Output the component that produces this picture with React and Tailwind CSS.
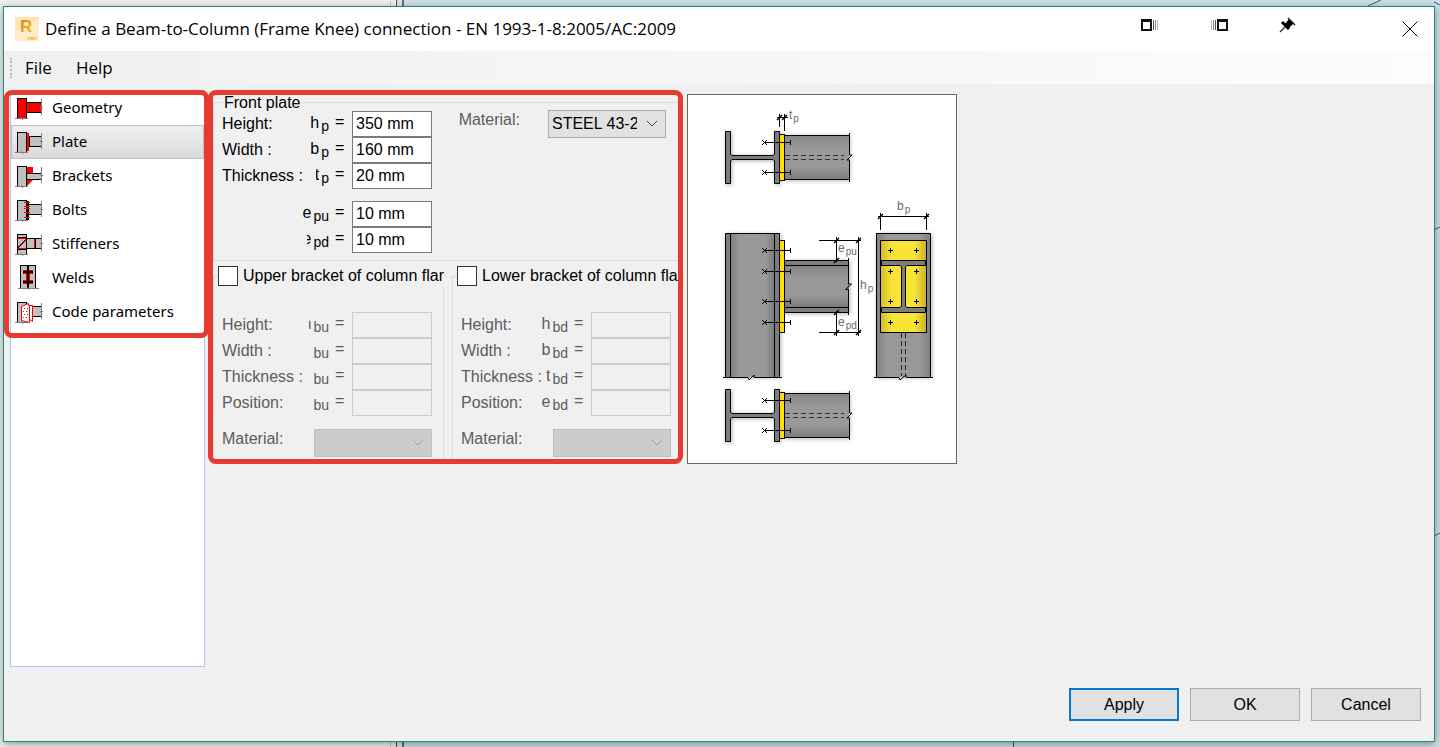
import { useState } from "react";

const FORM_FONT = "font-['Liberation_Sans',Arial,sans-serif]";

/* ---------- Navigation icons ---------- */

// Column stub with a ground line, and a beam coming in from the right
function Joint({ fill = "#c0c0c0", beamTop = 8, beamBottom = 19, children }) {
  return (
    <svg width="28" height="26" viewBox="0 0 28 26" className="shrink-0" aria-hidden="true">
      <rect x="12" y={beamTop} width="14" height={beamBottom - beamTop} fill={fill} />
      <path d={`M12 ${beamTop + 0.5}H26M12 ${beamBottom - 0.5}H26`} stroke="#000" />
      <rect x="2.5" y="4.5" width="9" height="20" fill={fill} stroke="#000" />
      <path d="M26.5 5V21M25 13.5H28M0 24.5H13M6 23L8 26" stroke="#808080" fill="none" />
      {children}
    </svg>
  );
}

function GeometryIcon() {
  return <Joint fill="#ff0000" />;
}

function PlateIcon() {
  return (
    <Joint>
      <rect x="12" y="5" width="2" height="18" fill="#ff0000" />
      <path d="M14.5 8V19" stroke="#000" />
    </Joint>
  );
}

function BracketsIcon() {
  return (
    <Joint beamTop={11} beamBottom={18}>
      <path d="M12 5H18V11H12ZM12 18H18L12 24Z" fill="#ff0000" />
    </Joint>
  );
}

function BoltsIcon() {
  return (
    <Joint>
      <rect x="11" y="5" width="3" height="19" fill="#000" />
      <path d="M9 6.5H15M9 10.5H15M9 12.5H15M9 16.5H15M9 21.5H15" stroke="#ff0000" />
    </Joint>
  );
}

function StiffenersIcon() {
  return (
    <Joint>
      <path d="M3 7.5H11M3 19.5H11M3 18L11 10" stroke="#000" />
      <path d="M3 8.5H11M3 18.5H11M3 17L11 9" stroke="#ff0000" />
      <path d="M19.5 9V18" stroke="#ff0000" />
      <path d="M20.5 9V18" stroke="#000" />
    </Joint>
  );
}

function WeldsIcon() {
  return (
    <svg width="28" height="26" viewBox="0 0 28 26" className="shrink-0" aria-hidden="true">
      <rect x="5.5" y="1.5" width="15" height="23" fill="#c0c0c0" stroke="#000" />
      <path d="M8 6.5H18M8 9.5H18M8 16.5H18M8 19.5H18M11.5 9V17M14.5 9V17" stroke="#ff0000" />
      <path d="M8 8H18M8 18H18M13 2V24" stroke="#000" strokeWidth="2" />
      <path d="M3 24.5H24M12 23L14 26" stroke="#808080" />
    </svg>
  );
}

function CodeIcon() {
  return (
    <Joint>
      <path d="M6.5 8.5L13.5 5.5V7.5H17.5V23.5L14.5 21.5V24.5L6.5 22.5Z" fill="#fff" stroke="#ff0000" />
      <path d="M14.5 8V22" stroke="#ff0000" />
      <path d="M9 10.5H13M8 13.5H13M9 16.5H13M8 19.5H13" stroke="#ff0000" strokeDasharray="1 2" />
    </Joint>
  );
}

const SECTIONS = [
  { name: "Geometry", Icon: GeometryIcon },
  { name: "Plate", Icon: PlateIcon },
  { name: "Brackets", Icon: BracketsIcon },
  { name: "Bolts", Icon: BoltsIcon },
  { name: "Stiffeners", Icon: StiffenersIcon },
  { name: "Welds", Icon: WeldsIcon },
  { name: "Code parameters", Icon: CodeIcon },
];

/* ---------- Title bar ---------- */

function AppLogo() {
  return (
    <svg width="24" height="24" viewBox="0 0 24 24" className="shrink-0" aria-hidden="true">
      <defs>
        <linearGradient id="logo-r" x1="0" y1="0" x2="1" y2="1">
          <stop offset="0" stopColor="#b9812c" />
          <stop offset="0.5" stopColor="#f0a31a" />
          <stop offset="1" stopColor="#fdb515" />
        </linearGradient>
      </defs>
      <rect width="24" height="24" fill="#fee3b4" />
      <path d="M0 24V14L24 2V24Z" fill="#fdeccb" />
      <text x="5" y="15" fontSize="17" fontWeight="700" fill="url(#logo-r)" fontFamily="Liberation Sans, sans-serif">
        R
      </text>
      <text x="13" y="23" fontSize="4" fontWeight="700" fill="#f5a400" fontFamily="Liberation Sans, sans-serif">
        PRO
      </text>
    </svg>
  );
}

function TitleBar() {
  return (
    <header className="flex h-11 items-center bg-white pl-[11px] pr-4">
      <AppLogo />
      <h1 className="ml-[6px] truncate font-['Open_Sans','Noto_Sans',sans-serif] text-[17px] text-black">
        Define a Beam-to-Column (Frame Knee) connection - EN 1993-1-8:2005/AC:2009
      </h1>
      <div className="mb-2 ml-auto flex items-center gap-[51px]">
        <button type="button" aria-label="Dock left">
          <svg width="18" height="12" viewBox="0 0 18 12">
            <path d="M0 0H11V12H0ZM2 3V10H9V3Z" fill="#111" fillRule="evenodd" />
            <path d="M12.5 1V11" stroke="#555" />
            <path d="M14.5 1V11" stroke="#888" />
            <path d="M16.5 1V11" stroke="#bbb" />
          </svg>
        </button>
        <button type="button" aria-label="Dock right">
          <svg width="18" height="12" viewBox="0 0 18 12">
            <path d="M7 0H18V12H7ZM9 3V10H16V3Z" fill="#111" fillRule="evenodd" />
            <path d="M5.5 1V11" stroke="#555" />
            <path d="M3.5 1V11" stroke="#888" />
            <path d="M1.5 1V11" stroke="#bbb" />
          </svg>
        </button>
        <button type="button" aria-label="Pin">
          <svg width="17" height="16" viewBox="0 0 17 16">
            <path d="M1 15L6 10" stroke="#333" strokeWidth="1.5" />
            <path d="M3 5L10 12" stroke="#000" strokeWidth="3" />
            <path d="M6 7L10 2L15 6L10 11Z" fill="#000" />
            <path d="M9 1L16 8" stroke="#222" strokeWidth="1.5" />
          </svg>
        </button>
      </div>
      <button type="button" aria-label="Close" className="ml-[106px]">
        <svg width="16" height="16" viewBox="0 0 16 16">
          <path d="M0.5 0.5L15.5 15.5M15.5 0.5L0.5 15.5" stroke="#000" />
        </svg>
      </button>
    </header>
  );
}

function MenuBar() {
  return (
    <nav className="flex h-[33px] items-center bg-linear-to-r from-[#f0f0f0] to-[#fcfcfc] pl-[6px] font-['Open_Sans','Noto_Sans',sans-serif] text-[17px] text-black">
      <span className="h-5 border-l-2 border-dotted border-[#b8b8b8]" />
      <button type="button" className="ml-[13px]">File</button>
      <button type="button" className="ml-6">Help</button>
    </nav>
  );
}

/* ---------- Form ---------- */

// A narrow cell cuts the leading letter off on its left side
function Symbol({ letter, sub, cut = "" }) {
  return (
    <span className="flex w-[27px] shrink-0 items-center justify-end gap-0.5">
      <span className={`flex justify-end overflow-hidden pb-0.5 leading-5 ${cut}`}>{letter}</span>
      <span className="pt-1 text-sm leading-5">{sub}</span>
    </span>
  );
}

function Field({ id, label, letter, sub, cut, value = "", onChange, disabled }) {
  return (
    <div className={`flex h-[26px] items-center ${disabled ? "text-[#5c5c5c]" : "text-black"}`}>
      <label htmlFor={id} className="w-20 shrink-0 whitespace-nowrap">
        {label}
      </label>
      <Symbol letter={letter} sub={sub} cut={cut} />
      <span className="w-[23px] shrink-0 pb-1 pl-[6px] leading-5">=</span>
      <input
        id={id}
        aria-label={label ? undefined : `${letter} ${sub}`}
        value={value}
        onChange={(e) => onChange?.(e.target.value)}
        disabled={disabled}
        className="h-[26px] w-20 border border-[#7a7a7a] bg-white px-[3px] text-black disabled:border-[#cccccc] disabled:bg-[#f0f0f0]"
      />
    </div>
  );
}

function MaterialSelect({ id, disabled, children }) {
  return (
    <div className="relative h-7 w-[118px] shrink-0">
      <select
        id={id}
        disabled={disabled}
        className="h-7 w-full appearance-none overflow-hidden border border-[#adadad] bg-[#e1e1e1] pl-[3px] pr-7 text-black disabled:border-[#bfbfbf] disabled:bg-[#cccccc] disabled:opacity-100"
      >
        {children}
      </select>
      <svg
        width="12"
        height="8"
        viewBox="0 0 12 8"
        className={`pointer-events-none absolute right-2 top-[10px] ${disabled ? "text-[#a0a0a0]" : "text-[#444444]"}`}
      >
        <path d="M1 1L6 6L11 1" fill="none" stroke="currentColor" />
      </svg>
    </div>
  );
}

const FRONT_FIELDS = [
  { id: "hp", label: "Height:", letter: "h", sub: "p" },
  { id: "bp", label: "Width :", letter: "b", sub: "p", cut: "w-2" },
  { id: "tp", label: "Thickness :", letter: "t", sub: "p", cut: "w-[3px]" },
];

const EDGE_FIELDS = [
  { id: "epu", letter: "e", sub: "pu", cut: "w-2" },
  { id: "epd", letter: "e", sub: "pd", cut: "w-1" },
];

function FrontPlate() {
  const [values, setValues] = useState({
    hp: "350 mm",
    bp: "160 mm",
    tp: "20 mm",
    epu: "10 mm",
    epd: "10 mm",
  });

  const renderField = (f) => (
    <Field
      key={f.id}
      {...f}
      value={values[f.id]}
      onChange={(v) => setValues({ ...values, [f.id]: v })}
    />
  );

  return (
    <fieldset className="border-b border-l border-t border-[#dcdcdc] pb-[7px] pl-2">
      <legend className="ml-px px-px text-black leading-[15px]">Front plate</legend>
      <div className="flex justify-between pr-3">
        <div className="space-y-3 pt-px">
          <div>{FRONT_FIELDS.map(renderField)}</div>
          <div>{EDGE_FIELDS.map(renderField)}</div>
        </div>
        <div className="flex gap-7">
          <label htmlFor="plate-material" className="text-[#5c5c5c] leading-5">
            Material:
          </label>
          <MaterialSelect id="plate-material">
            <option>STEEL 43-275</option>
            <option>STEEL 50-355</option>
          </MaterialSelect>
        </div>
      </div>
    </fieldset>
  );
}

function Bracket({ name, title, sub, cuts, className }) {
  const [enabled, setEnabled] = useState(false);
  const rows = [
    { label: "Height:", letter: "h" },
    { label: "Width :", letter: "b" },
    { label: "Thickness :", letter: "t" },
    { label: "Position:", letter: "e" },
  ];

  return (
    <fieldset className={`min-w-0 border-l border-t border-[#dcdcdc] pb-0.5 ${className}`}>
      <legend className="ml-1 flex h-[26px] w-[calc(100%-3px)] items-center overflow-hidden bg-[#f0f0f0]">
        <input
          id={name}
          type="checkbox"
          checked={enabled}
          onChange={(e) => setEnabled(e.target.checked)}
          className="h-5 w-5 shrink-0 appearance-none border border-[#333333] bg-white checked:bg-[#333333]"
        />
        <label htmlFor={name} className="whitespace-nowrap pl-[5px] text-black">
          {title}
        </label>
      </legend>
      <div className="pl-2 pt-[23px]">
        {rows.map((row, i) => (
          <Field
            key={row.label}
            id={`${name}-${row.letter}`}
            {...row}
            sub={sub}
            cut={cuts[i]}
            disabled={!enabled}
          />
        ))}
        <div className="mt-[13px] flex">
          <label htmlFor={`${name}-material`} className="w-[92px] shrink-0 text-[#5c5c5c] leading-5">
            Material:
          </label>
          <MaterialSelect id={`${name}-material`} disabled={!enabled} />
        </div>
      </div>
    </fieldset>
  );
}

/* ---------- Connection drawing ---------- */

function Bolt({ y }) {
  return (
    <path
      d={`M77 ${y}H103M103.5 ${y - 2.5}V${y + 2.5}M75 ${y - 2.5}L80 ${y + 2.5}M80 ${y - 2.5}L75 ${y + 2.5}`}
      stroke="#000"
      fill="none"
    />
  );
}

function PlanView({ y }) {
  return (
    <g transform={`translate(0 ${y})`}>
      <g filter="url(#soft)">
        <path
          d="M38.5 37.5H43.5V60L45 61.5H86L87.5 60V37.5H92.5V89.5H87.5V67L86 65.5H45L43.5 67V89.5H38.5Z"
          fill="#7d7d7d"
          stroke="#000"
        />
        <rect x="97" y="41" width="65" height="45" fill="url(#beam)" />
      </g>
      <path d="M97 41.5H162M97 85.5H162M162.5 39V61L165 61L160 66H162.5V88" stroke="#000" fill="none" />
      <path d="M98 61.5H157M98 65.5H157" stroke="#333" strokeDasharray="5 3" />
      <rect x="92.5" y="40.5" width="5" height="46" fill="#ffde00" stroke="#000" />
      <Bolt y={48.5} />
      <Bolt y={78.5} />
    </g>
  );
}

// Slanted tick where a dimension line meets its extension line
function Tick({ x, y }) {
  return <path d={`M${x - 2.5} ${y + 2.5}L${x + 2.5} ${y - 2.5}`} stroke="#000" strokeWidth="1.5" />;
}

function DimLabel({ x, y, letter, sub }) {
  return (
    <text x={x} y={y} fontSize="12" fill="#6b6b6b" fontFamily="Liberation Sans, sans-serif">
      {letter}
      <tspan dx="1" dy="3" fontSize="10">
        {sub}
      </tspan>
    </text>
  );
}

const BOLT_ROWS = [156.5, 177.5, 207.5, 228.5];

function ConnectionDrawing() {
  return (
    <svg viewBox="1 1 268 368" width="268" height="368" role="img" aria-label="Front plate dimensions">
      <defs>
        <linearGradient id="beam" x1="0" y1="0" x2="0" y2="1">
          <stop offset="0" stopColor="#858585" />
          <stop offset="0.3" stopColor="#999999" />
          <stop offset="0.7" stopColor="#999999" />
          <stop offset="1" stopColor="#7a7a7a" />
        </linearGradient>
        <linearGradient id="column" x1="0" y1="0" x2="1" y2="0">
          <stop offset="0" stopColor="#808080" />
          <stop offset="0.2" stopColor="#999999" />
          <stop offset="0.8" stopColor="#999999" />
          <stop offset="1" stopColor="#7d7d7d" />
        </linearGradient>
        <linearGradient id="yellow" x1="0" y1="0" x2="1" y2="0">
          <stop offset="0" stopColor="#d3bc24" />
          <stop offset="0.25" stopColor="#f8e337" />
          <stop offset="0.75" stopColor="#f8e337" />
          <stop offset="1" stopColor="#c9b323" />
        </linearGradient>
        <filter id="soft" x="-20%" y="-20%" width="140%" height="140%">
          <feDropShadow dx="1" dy="1" stdDeviation="2" floodColor="#000" floodOpacity="0.3" />
        </filter>
      </defs>

      <PlanView y={0} />
      <PlanView y={258} />

      {/* plate thickness */}
      <path d="M92.5 20V33M97.5 20V37M90 23.5H101" stroke="#000" />
      <Tick x={92.5} y={23.5} />
      <Tick x={97.5} y={23.5} />
      <DimLabel x={102} y={25} letter="t" sub="p" />

      {/* side view */}
      <g filter="url(#soft)">
        <rect x="38" y="139" width="55" height="144" fill="#7d7d7d" />
        <rect x="97" y="166" width="65" height="53" fill="#7d7d7d" />
      </g>
      <rect x="44" y="140" width="43" height="143" fill="url(#column)" />
      <rect x="98" y="172" width="63" height="41" fill="url(#beam)" />
      <path d="M38.5 283V139.5H92.5V283M43.5 140V283M87.5 140V283" stroke="#000" fill="none" />
      <path d="M36 283.5H61L62 286L67 281V283.5H95" stroke="#000" fill="none" />
      <path d="M98 166.5H162M98 171.5H162M98 213.5H162M98 218.5H162" stroke="#000" />
      <path d="M161.5 164V190H164.5L158.5 195.5H161.5V221" stroke="#000" fill="none" />
      <rect x="92.5" y="146.5" width="5" height="92" fill="#ffde00" stroke="#000" />
      {BOLT_ROWS.map((y) => (
        <Bolt key={y} y={y} />
      ))}

      {/* edge distances and plate height */}
      <path d="M132 146.5H174M132 238.5H174M149.5 143V168M149.5 217V242M171.5 143V242" stroke="#000" />
      <Tick x={149.5} y={146.5} />
      <Tick x={149.5} y={166.5} />
      <Tick x={149.5} y={218.5} />
      <Tick x={149.5} y={238.5} />
      <Tick x={171.5} y={146.5} />
      <Tick x={171.5} y={238.5} />
      <DimLabel x={151} y={158} letter="e" sub="pu" />
      <DimLabel x={151} y={232} letter="e" sub="pd" />
      <DimLabel x={173} y={195} letter="h" sub="p" />

      {/* front view */}
      <rect x="189" y="139" width="55" height="144" fill="url(#column)" filter="url(#soft)" />
      <path d="M189.5 283V139.5H243.5V283" stroke="#000" fill="none" />
      <path d="M187 283.5H212L213 286L219 281V283.5H246" stroke="#000" fill="none" />
      <path d="M214.5 239V282M218.5 239V282" stroke="#222" strokeDasharray="5 3" />
      <rect x="193.5" y="146.5" width="46" height="92" fill="url(#yellow)" stroke="#000" />
      <path
        d="M194.5 166.5H238.5V171.5H220L218.5 173V212L220 213.5H238.5V218.5H194.5V213.5H213L214.5 212V173L213 171.5H194.5Z"
        fill="#7d7d7d"
        stroke="#000"
      />
      {BOLT_ROWS.map((y) => (
        <path key={y} d={`M201 ${y}H206M203.5 ${y - 2.5}V${y + 2.5}M227 ${y}H232M229.5 ${y - 2.5}V${y + 2.5}`} stroke="#000" />
      ))}

      {/* plate width */}
      <path d="M191 122.5H242M193.5 119V136M239.5 119V136" stroke="#000" />
      <Tick x={193.5} y={122.5} />
      <Tick x={239.5} y={122.5} />
      <DimLabel x={210} y={116} letter="b" sub="p" />
    </svg>
  );
}

/* ---------- Window ---------- */

// Lines of the model view that show around the dialog
function Backdrop() {
  return (
    <svg className="absolute inset-0 h-full w-full" aria-hidden="true">
      <path d="M1368 6L1381 0M1434 2L1440 5M1434 230L1440 227M1434 536L1440 533M1013.5 740V747" stroke="#44585c" />
    </svg>
  );
}

export default function App() {
  const [section, setSection] = useState("Plate");

  return (
    <div
      className={`relative flex min-h-screen bg-[linear-gradient(90deg,#f0f0f0_390px,#c8c8c8_390px,#c8c8c8_391px,#f0f0f0_391px,#f0f0f0_396px,#555555_396px,#555555_397px,#e4e4e4_397px,#e4e4e4_402px,#667077_402px,#667077_404px,#cddfea_404px)] pb-[5px] pl-[3px] pr-[5px] pt-[6px] text-base ${FORM_FONT}`}
    >
      <Backdrop />
      <div className="relative flex min-w-0 flex-1 flex-col border border-[#1b8f7a] bg-[#f0f0f0] shadow-[0_2px_8px_rgba(0,0,0,0.4)]">
        <TitleBar />
        <MenuBar />

        <main className="flex flex-1 items-start pl-[6px] pt-[6px]">
          <div className="relative w-[195px] shrink-0 self-stretch border border-[#b4c2fa] bg-white">
            <ul className="font-['Noto_Sans','Open_Sans',sans-serif] text-[15px] text-black">
              {SECTIONS.map(({ name, Icon }) => (
                <li key={name}>
                  <button
                    type="button"
                    onClick={() => setSection(name)}
                    className={`flex h-[34px] w-full items-center gap-[9px] border pb-0.5 pl-[3px] text-left ${
                      section === name
                        ? "border-[#c0c0c0] bg-linear-to-b from-[#efefef] to-[#dadada]"
                        : "border-transparent"
                    }`}
                  >
                    <Icon />
                    <span>{name}</span>
                  </button>
                </li>
              ))}
            </ul>
            {/* highlight around the section list */}
            <div className="pointer-events-none absolute -left-[7px] -right-[5px] -top-px h-[248px] rounded-lg border-5 border-[#e53b30]" />
          </div>

          <section className="relative ml-[3px] w-[475px] shrink-0 overflow-hidden rounded-lg border-5 border-[#e53b30]">
            <FrontPlate />
            <div className="flex gap-2 pt-0.5">
              <Bracket
                name="upper"
                title="Upper bracket of column flange"
                sub="bu"
                cuts={["w-[2px]", "w-0", "w-0", "w-0"]}
                className="w-[231px] shrink-0 border-r"
              />
              <Bracket
                name="lower"
                title="Lower bracket of column flange"
                sub="bd"
                cuts={["", "", "", ""]}
                className="flex-1"
              />
            </div>
          </section>

          <figure className="ml-1 mt-1 shrink-0 border border-[#666666] bg-white">
            <ConnectionDrawing />
          </figure>
        </main>

        <footer className="flex justify-end gap-[11px] pb-5 pr-[13px] pt-[21px] text-black">
          <button type="button" className="h-[33px] w-[110px] border-2 border-[#0078d7] bg-[#e1e1e1]">
            Apply
          </button>
          <button type="button" className="h-[33px] w-[110px] border border-[#adadad] bg-[#e1e1e1]">
            OK
          </button>
          <button type="button" className="h-[33px] w-[110px] border border-[#adadad] bg-[#e1e1e1]">
            Cancel
          </button>
        </footer>
      </div>
    </div>
  );
}
